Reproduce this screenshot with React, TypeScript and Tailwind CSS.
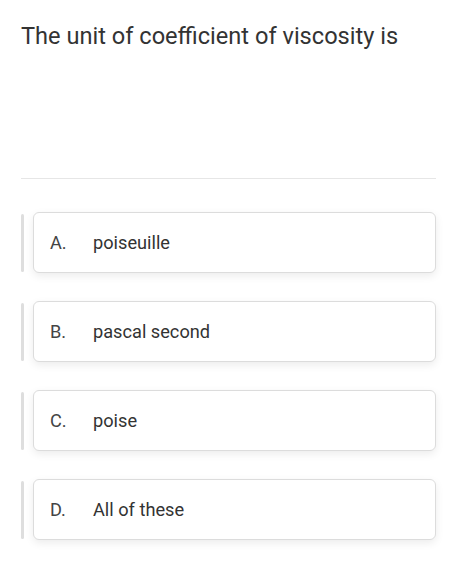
import React from "react";

const options = [
  { k: "A.", t: "poiseuille" },
  { k: "B.", t: "pascal second" },
  { k: "C.", t: "poise" },
  { k: "D.", t: "All of these" },
];

export default function App() {
  return (
    <div
      className="w-[474px] h-[573px] bg-white overflow-hidden"
      style={{ fontFamily: "Roboto, 'Liberation Sans', sans-serif" }}
    >
      <div className="pl-[21px] pr-[38px] pt-[21px]">
        <h1 className="text-[23.6px] leading-[30px] text-[#333333] font-normal">
          The unit of coefficient of viscosity is
        </h1>
        <div className="mt-[127px] h-px bg-[#e6e6e6]" />
        <div className="mt-[33px] flex flex-col gap-[28px]">
          {options.map((o) => (
            <div key={o.k} className="flex items-center">
              <div className="w-[3px] h-[58px] bg-[#dedede] rounded-full" />
              <div className="ml-[9px] flex-1 h-[61px] flex items-center rounded-[6px] border border-[#dcdcdc] bg-white shadow-[0_3px_8px_rgba(0,0,0,0.08)] pl-[16px]">
                <span className="w-[43px] text-[18.2px] text-[#444444]">{o.k}</span>
                <span className="text-[18.2px] text-[#333333]">{o.t}</span>
              </div>
            </div>
          ))}
        </div>
      </div>
    </div>
  );
}
